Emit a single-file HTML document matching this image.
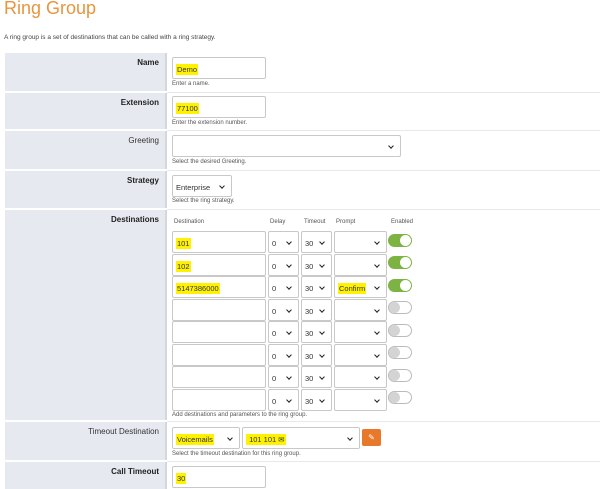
<!DOCTYPE html>
<html><head><meta charset="utf-8"><style>
*{box-sizing:border-box;margin:0;padding:0}
body{width:600px;height:489px;overflow:hidden;background:#fff;font-family:"Liberation Sans",Arial,sans-serif;color:#333;position:relative}
.a{position:absolute}
.lab{position:absolute;left:5px;width:162px;background:#e6e9f0;border-right:2px solid #d3d7de}
.lab span{position:absolute;right:6px;top:5px;font-size:8px;font-weight:bold;color:#222}
.lab span.n{font-weight:normal;color:#333}
.row{position:absolute;left:167px;width:433px;border-bottom:1px solid #e8e8e8}
.in{position:absolute;height:22px;border:1px solid #c8c8c8;border-radius:2px;background:#fff;font-size:7.5px;padding:7px 0 0 3px}
.hl{background:#fff200;padding:1px 1px}
.sel:after{content:"";position:absolute;right:7px;top:8px;width:3px;height:3px;border-right:1.5px solid #222;border-bottom:1.5px solid #222;transform:rotate(45deg)}
.help{position:absolute;font-size:6px;color:#555}
.hd{position:absolute;top:219px;font-size:6px;color:#555}
.tg{position:absolute;left:388px;width:24px;height:13px;border-radius:7px;background:#7cb342}
.tg:after{content:"";position:absolute;right:1px;top:1px;width:11px;height:11px;border-radius:50%;background:#fff}
.tg.off{background:#fff;border:1px solid #bbb}
.tg.off:after{left:0;top:0;width:11px;height:11px;background:#d4d4d4}
</style></head><body>
<div class="a" style="left:4px;top:-2px;font-size:18px;color:#e8963e">Ring Group</div>
<div class="a" style="left:4px;top:34px;font-size:6.5px;color:#444">A ring group is a set of destinations that can be called with a ring strategy.</div>

<div class="lab" style="top:53px;height:38px"><span>Name</span></div>
<div class="lab" style="top:93px;height:36px"><span>Extension</span></div>
<div class="lab" style="top:131px;height:38px"><span class="n">Greeting</span></div>
<div class="lab" style="top:171px;height:37px"><span>Strategy</span></div>
<div class="lab" style="top:210px;height:210px"><span>Destinations</span></div>
<div class="lab" style="top:422px;height:38px"><span class="n">Timeout Destination</span></div>
<div class="lab" style="top:462px;height:27px"><span>Call Timeout</span></div>

<div class="row" style="top:53px;height:40px"></div>
<div class="row" style="top:93px;height:38px"></div>
<div class="row" style="top:131px;height:40px"></div>
<div class="row" style="top:171px;height:39px"></div>
<div class="row" style="top:210px;height:212px"></div>
<div class="row" style="top:422px;height:40px"></div>

<div class="in" style="left:172px;top:57px;width:94px"><span class="hl">Demo</span></div>
<div class="help" style="left:172px;top:81px">Enter a name.</div>
<div class="in" style="left:172px;top:96px;width:94px"><span class="hl">77100</span></div>
<div class="help" style="left:172px;top:120px">Enter the extension number.</div>
<div class="in sel" style="left:172px;top:135px;width:229px"></div>
<div class="help" style="left:172px;top:159px">Select the desired Greeting.</div>
<div class="in sel" style="left:172px;top:175px;width:60px">Enterprise</div>
<div class="help" style="left:172px;top:198px">Select the ring strategy.</div>

<div class="hd" style="left:174px">Destination</div>
<div class="hd" style="left:270px">Delay</div>
<div class="hd" style="left:304px">Timeout</div>
<div class="hd" style="left:336px">Prompt</div>
<div class="hd" style="left:391px">Enabled</div>

<div class="in" style="left:172px;top:231px;width:94px"><span class="hl">101</span></div>
<div class="in sel" style="left:268px;top:231px;width:31px">0</div>
<div class="in sel" style="left:301px;top:231px;width:31px">30</div>
<div class="in sel" style="left:334px;top:231px;width:53px"></div>
<div class="tg" style="top:234px"></div>

<div class="in" style="left:172px;top:254px;width:94px"><span class="hl">102</span></div>
<div class="in sel" style="left:268px;top:254px;width:31px">0</div>
<div class="in sel" style="left:301px;top:254px;width:31px">30</div>
<div class="in sel" style="left:334px;top:254px;width:53px"></div>
<div class="tg" style="top:256px"></div>

<div class="in" style="left:172px;top:276px;width:94px"><span class="hl">5147386000</span></div>
<div class="in sel" style="left:268px;top:276px;width:31px">0</div>
<div class="in sel" style="left:301px;top:276px;width:31px">30</div>
<div class="in sel" style="left:334px;top:276px;width:53px"><span class="hl">Confirm</span></div>
<div class="tg" style="top:279px"></div>

<div class="in" style="left:172px;top:299px;width:94px"></div>
<div class="in sel" style="left:268px;top:299px;width:31px">0</div>
<div class="in sel" style="left:301px;top:299px;width:31px">30</div>
<div class="in sel" style="left:334px;top:299px;width:53px"></div>
<div class="tg off" style="top:301px"></div>

<div class="in" style="left:172px;top:321px;width:94px"></div>
<div class="in sel" style="left:268px;top:321px;width:31px">0</div>
<div class="in sel" style="left:301px;top:321px;width:31px">30</div>
<div class="in sel" style="left:334px;top:321px;width:53px"></div>
<div class="tg off" style="top:324px"></div>

<div class="in" style="left:172px;top:344px;width:94px"></div>
<div class="in sel" style="left:268px;top:344px;width:31px">0</div>
<div class="in sel" style="left:301px;top:344px;width:31px">30</div>
<div class="in sel" style="left:334px;top:344px;width:53px"></div>
<div class="tg off" style="top:346px"></div>

<div class="in" style="left:172px;top:366px;width:94px"></div>
<div class="in sel" style="left:268px;top:366px;width:31px">0</div>
<div class="in sel" style="left:301px;top:366px;width:31px">30</div>
<div class="in sel" style="left:334px;top:366px;width:53px"></div>
<div class="tg off" style="top:369px"></div>

<div class="in" style="left:172px;top:389px;width:94px"></div>
<div class="in sel" style="left:268px;top:389px;width:31px">0</div>
<div class="in sel" style="left:301px;top:389px;width:31px">30</div>
<div class="in sel" style="left:334px;top:389px;width:53px"></div>
<div class="tg off" style="top:391px"></div>
<div class="help" style="left:172px;top:412px">Add destinations and parameters to the ring group.</div>

<div class="in sel" style="left:172px;top:427px;width:68px"><span class="hl">Voicemails</span></div>
<div class="in sel" style="left:242px;top:427px;width:118px"><span class="hl">&nbsp;101 101 ✉</span></div>
<div class="a" style="left:362px;top:429px;width:19px;height:17px;background:#e8782a;border-radius:2px;color:#fff;font-size:8px;text-align:center;line-height:17px">✎</div>
<div class="help" style="left:172px;top:451px">Select the timeout destination for this ring group.</div>
<div class="in" style="left:172px;top:466px;width:94px"><span class="hl">30</span></div>
</body></html>
